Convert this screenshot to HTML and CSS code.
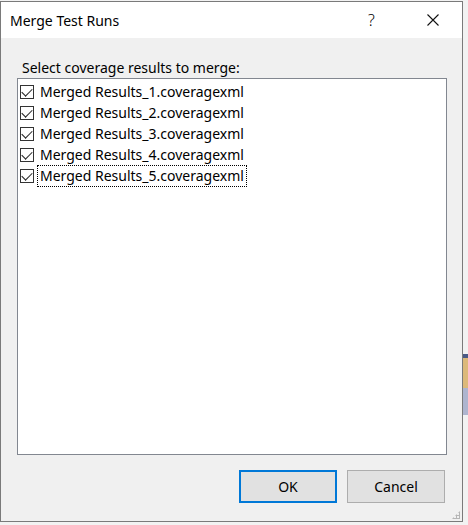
FILE: index.html
```html
<!DOCTYPE html>
<html lang="en">

<head>
  <meta charset="UTF-8">
  <title>Merge Test Runs</title>
  <link rel="stylesheet" href="styles.css">
</head>

<body>
  <div class="backdrop">
    <div class="window">
      <header class="titlebar">
        <span class="title">Merge Test Runs</span>
        <span class="help">?</span>
        <span class="close">
          <svg width="12" height="12" viewBox="0 0 12 12">
            <path d="M0.5 0.5 L11.5 11.5 M11.5 0.5 L0.5 11.5" stroke="#111" stroke-width="1.1" fill="none" />
          </svg>
        </span>
      </header>

      <div class="content">
        <div class="prompt">Select coverage results to merge:</div>

        <ul class="listbox">
          <li class="item"><span class="check"></span><span class="name">Merged Results_1.coveragexml</span></li>
          <li class="item"><span class="check"></span><span class="name">Merged Results_2.coveragexml</span></li>
          <li class="item"><span class="check"></span><span class="name">Merged Results_3.coveragexml</span></li>
          <li class="item"><span class="check"></span><span class="name">Merged Results_4.coveragexml</span></li>
          <li class="item"><span class="check"></span><span class="name focused">Merged Results_5.coveragexml</span></li>
        </ul>

        <div class="buttons">
          <button class="btn default">OK</button>
          <button class="btn">Cancel</button>
        </div>
      </div>
      <span class="grip"></span>
    </div>

    <div class="behind">
      <div class="stripe navy"></div>
      <div class="stripe gold"></div>
      <div class="stripe slate"></div>
    </div>
  </div>
</body>

</html>
```

FILE: styles.css
```css
:root {
  --face: #f0f0f0;
  --frame: #7a7a7a;
  --list-border: #828790;
  --text: #000;
  --accent: #0078d7;
}

* {
  box-sizing: border-box;
}

body {
  margin: 0;
  background: #f2f2f2;
  font-family: "Noto Sans", "Open Sans", sans-serif;
  font-size: 14px;
  color: var(--text);
}

.backdrop {
  display: flex;
  align-items: flex-start;
  padding-top: 1px;
  height: 525px;
}

.window {
  position: relative;
  width: 463px;
  height: 521px;
  border: 1px solid var(--frame);
  background: var(--face);
  display: flex;
  flex-direction: column;
}

.titlebar {
  height: 37px;
  background: #fff;
  display: flex;
  align-items: center;
  padding-left: 9px;
}

.title {
  flex: 1;
  font-size: 14px;
}

.help {
  width: 12px;
  margin-right: 47px;
  font-size: 16px;
  font-weight: 300;
}

.close {
  width: 12px;
  height: 12px;
  margin-right: 23px;
  display: flex;
}

.content {
  flex: 1;
  display: flex;
  flex-direction: column;
  padding: 19px 16px 18px 16px;
}

.prompt {
  height: 21px;
  line-height: 21px;
  padding-left: 5px;
}

.listbox {
  list-style: none;
  margin: 0;
  padding: 2px 0 0 2px;
  width: 430px;
  height: 377px;
  background: #fff;
  border: 1px solid var(--list-border);
}

.item {
  height: 21px;
  display: flex;
  align-items: center;
}

.check {
  position: relative;
  width: 14px;
  height: 14px;
  border: 1px solid #333;
  background: #fff;
  margin-right: 3px;
}

.check::after {
  content: "";
  position: absolute;
  left: 3px;
  top: 0px;
  width: 5px;
  height: 9px;
  border-right: 1px solid #222;
  border-bottom: 1px solid #222;
  transform: rotate(45deg);
}

.name {
  padding: 0 2px;
  line-height: 20px;
  border: 1px solid transparent;
}

.name.focused {
  border: 1px dotted #000;
}

.buttons {
  display: flex;
  justify-content: flex-end;
  gap: 10px;
  margin-top: 15px;
  padding-right: 1px;
}

.btn {
  width: 98px;
  height: 33px;
  font-family: inherit;
  font-size: 14px;
  color: var(--text);
  background: #e1e1e1;
  border: 1px solid #adadad;
  border-radius: 0;
  padding: 0;
}

.btn.default {
  border: 2px solid var(--accent);
}

.grip {
  position: absolute;
  right: 2px;
  bottom: 2px;
  width: 8px;
  height: 8px;
  background-image: radial-gradient(circle, #b5b5b5 1px, transparent 1.2px);
  background-size: 3px 3px;
  clip-path: polygon(100% 0, 100% 100%, 0 100%);
}

.behind {
  flex: 1;
  display: flex;
  flex-direction: column;
  padding-top: 353px;
}

.stripe.navy {
  height: 4px;
  background: #4a5a86;
}

.stripe.gold {
  height: 30px;
  background: #dcb97a;
}

.stripe.slate {
  height: 27px;
  background: #aeb5cf;
}
```
